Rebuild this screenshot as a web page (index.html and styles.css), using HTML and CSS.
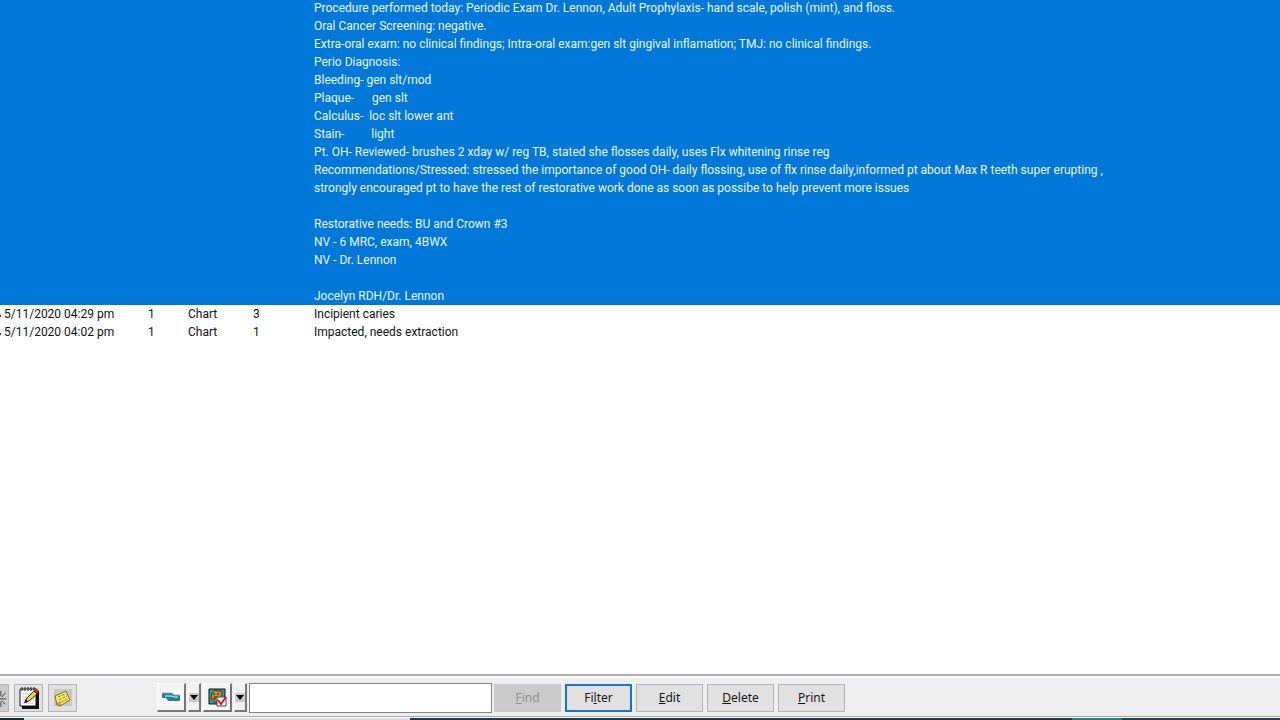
FILE: index.html
```html
<!DOCTYPE html>
<html lang="en">
<head>
<meta charset="utf-8">
<title>Chart notes</title>
<link rel="stylesheet" href="styles.css">
</head>
<body>
<main class="notes">
<table class="grid">
<colgroup><col class="c-date"><col class="c-num"><col class="c-type"><col class="c-tooth"><col></colgroup>
<tbody>
<tr class="selected"><td></td><td></td><td></td><td></td><td class="note">Procedure performed today: Periodic Exam Dr. Lennon, Adult Prophylaxis- hand scale, polish (mint), and floss.
Oral Cancer Screening: negative.
Extra-oral exam: no clinical findings; Intra-oral exam:gen slt gingival inflamation; TMJ: no clinical findings.
Perio Diagnosis:
Bleeding- gen slt/mod
Plaque-      gen slt
Calculus-  loc slt lower ant
Stain-         light
Pt. OH- Reviewed- brushes 2 xday w/ reg TB, stated she flosses daily, uses Flx whitening rinse reg
Recommendations/Stressed: stressed the importance of good OH- daily flossing, use of flx rinse daily,informed pt about Max R teeth super erupting ,
strongly encouraged pt to have the rest of restorative work done as soon as possibe to help prevent more issues

Restorative needs: BU and Crown #3
NV - 6 MRC, exam, 4BWX
NV - Dr. Lennon

Jocelyn RDH/Dr. Lennon</td></tr>
<tr><td class="date">5/11/2020 04:29 pm</td><td>1</td><td>Chart</td><td>3</td><td>Incipient caries</td></tr>
<tr><td class="date">5/11/2020 04:02 pm</td><td>1</td><td>Chart</td><td>1</td><td>Impacted, needs extraction</td></tr>
</tbody>
</table>
</main>
<footer class="toolbar">
<div class="tools">
<button class="tool cut" aria-label="Tooth chart"><svg width="9" height="24" viewBox="0 0 9 24"><path d="M0 13h7M1 4v6M1 16v6M2 11l4-5M2 15l4 4" stroke="#333" fill="none"/></svg></button>
<button class="tool" aria-label="Write note"><svg width="22" height="24" viewBox="0 0 22 24"><path d="M4 5h17v18H4z" fill="#111"/><path d="M2 3h16v17H2z" fill="#fff" stroke="#111"/><path d="M4 1v4M7 1v4M10 1v4M13 1v4M16 1v4" stroke="#222"/><path d="M4 8h12M4 11h12M4 14h12M4 17h12" stroke="#c4c4c4"/><path d="M7 16l2-4 7-7 3 3-8 7z" fill="#eddc29" stroke="#222"/><path d="M16 5l2-3 3 3-2 3z" fill="#b52c28"/><path d="M6 17l2-4 2 3z" fill="#111"/></svg></button>
<button class="tool" aria-label="Sticky note"><svg width="20" height="20" viewBox="0 0 20 20"><path d="M1 1h18v17H1z" fill="#c8c8c8"/><path d="M2 8l11-5 4 9-10 6-3-1z" fill="#f4eb62" stroke="#77702b"/><path d="M5 9l7-3M6 12l8-4M8 14l7-3" stroke="#8a8235" stroke-dasharray="3 1"/><path d="M4 16l3-2v4z" fill="#fff9a9" stroke="#77702b"/></svg></button>
</div>
<div class="tools menus">
<button class="raised" aria-label="Appliance"><svg width="20" height="12" viewBox="0 0 20 12"><path d="M0 0h20v12H0z" fill="#fff"/><path d="M1 2h10l2 2h6v6H7L5 7H1z" fill="#238488"/><path d="M4 5h7l2 1h4" stroke="#d5f1f1" fill="none"/><path d="M1 2h10l2 2h6" stroke="#6bb4b7" fill="none"/></svg></button>
<button class="raised drop" aria-label="Appliance options"><svg width="8" height="5" viewBox="0 0 8 5"><path d="M0 0h8L4 5z"/></svg></button>
<button class="raised" aria-label="Status"><svg width="19" height="19" viewBox="0 0 19 19"><path d="M1 1h16v15H1z" fill="#1fa5a8" stroke="#111"/><path d="M4 5l3-3 3 1 4 0v5l-4 6H6L3 10z" fill="#c88636" stroke="#4c3920"/><path d="M5 6h2M9 6h2M6 9h3M5 11h3" stroke="#302519"/><path d="M9 9h9v9H9z" fill="#fff" stroke="#444"/><path d="M10 12l3 4 5-7" stroke="#e31220" stroke-width="2" fill="none"/></svg></button>
<button class="raised drop" aria-label="Status options"><svg width="8" height="5" viewBox="0 0 8 5"><path d="M0 0h8L4 5z"/></svg></button>
</div>
<input class="search" type="text" aria-label="Search notes">
<div class="actions">
<button class="action" disabled><u>F</u>ind</button>
<button class="action default">Fi<u>l</u>ter</button>
<button class="action"><u>E</u>dit</button>
<button class="action"><u>D</u>elete</button>
<button class="action"><u>P</u>rint</button>
</div>
</footer>
<div class="edge"></div>
</body>
</html>
```
FILE: styles.css
```css
* { box-sizing: border-box; }
body { margin: 0; height: 100vh; display: flex; flex-direction: column; overflow: hidden; background: #fff; color: #111; font-family: Roboto, "Liberation Sans", sans-serif; font-size: 12px; }
.notes { flex: 1; min-height: 0; overflow: hidden; }
.grid { width: 100%; margin-top: -1px; table-layout: fixed; border-collapse: collapse; line-height: 18px; }
.grid td { padding: 0; vertical-align: top; white-space: pre; }
.c-date { width: 148px; }
.c-num { width: 40px; }
.c-type { width: 65px; }
.c-tooth { width: 61px; }
.selected { background: #0078d9; color: #e8f6ff; }
.grid .date { padding-left: 4px; background: linear-gradient(#444, #444) 0 10px / 1px 2px no-repeat; }
.toolbar { display: flex; align-items: center; height: 43px; padding-top: 3px; border-top: 2px solid #b0aeb9; border-bottom: 1px solid #a5a7ae; box-shadow: inset 0 2px #fff; background: #eee; }
.tools { display: flex; align-items: center; gap: 5px; }
.menus { gap: 2px; margin-left: 80px; }
button { font: inherit; color: #171717; }
.tool { display: flex; align-items: center; justify-content: center; width: 29px; height: 28px; padding: 0; border: 1px solid #b5b5b5; background: #e1e1e1; }
.tool.cut { width: 9px; border-left: 0; background: #ccc; overflow: hidden; }
.raised { display: flex; align-items: center; justify-content: center; width: 29px; height: 29px; padding: 0; border: 1px solid #fff; border-right: 2px solid #777; border-bottom: 2px solid #777; background: #f4f4f4; }
.raised.drop { width: 13px; background: linear-gradient(#f0f0f0 9px, #c8c8c8 9px 18px, #f0f0f0 18px); }
.search { width: 243px; height: 30px; margin: 0 2px; padding: 2px 4px; border: 1px solid #858585; background: #fff; font: inherit; }
.actions { display: flex; gap: 4px; }
.action { width: 67px; height: 28px; padding: 0; border: 1px solid #b5b5b5; background: #e1e1e1; font-family: "Noto Sans", sans-serif; font-size: 12px; line-height: 18px; }
.action:disabled { border-color: #c9c9c9; background: #cbcbcb; color: #929292; }
.action.default { border: 2px solid #1475ce; }
.edge { height: 3px; border-top: 1px solid #fff; background: linear-gradient(90deg, #20272c 24px, #dedede 24px 410px, #24383b 410px 1072px, #347786 1072px 1122px, #293f49 1122px); }
```
